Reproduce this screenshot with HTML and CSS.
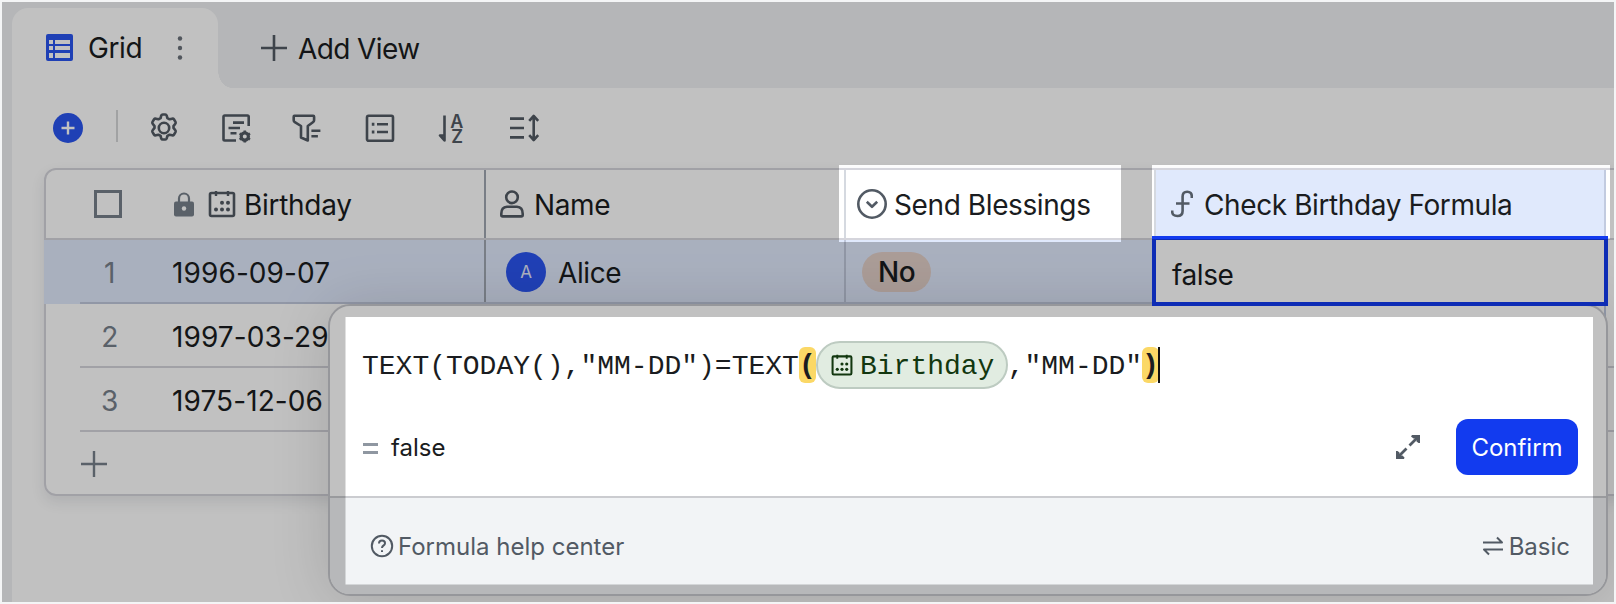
FILE: index.html
```html
<!DOCTYPE html>
<html lang="en">
  <head>
    <meta charset="UTF-8" />
    <meta name="viewport" content="width=device-width, initial-scale=1.0" />
    <link rel="stylesheet" href="styles.css">
    <title>Grid</title>
  </head>

  <body>
    <div class="app">
      <div class="sidebar"></div>
      <div class="main">
        <div class="tabs">
          <div class="tab">
            <svg class="tab-icon" width="27" height="27" viewBox="0 0 27 27">
              <rect width="27" height="27" rx="2" fill="#2a55f0" />
              <path d="M3 6h4v4H3zM9 6h15v4H9zM3 12h4v4H3zM9 12h15v4H9zM3 19h4v5H3zM9 19h15v5H9z" fill="#fff" />
            </svg>
            <span>Grid</span>
            <svg class="dots" width="6" height="26" viewBox="0 0 6 26" fill="#6b727b">
              <circle cx="3" cy="3.5" r="2.2" /><circle cx="3" cy="13" r="2.2" /><circle cx="3" cy="22.5" r="2.2" />
            </svg>
          </div>
          <div class="add-view">
            <svg width="26" height="26" viewBox="0 0 26 26" class="line"><path d="M13 0v26M0 13h26" /></svg>
            <span>Add View</span>
          </div>
        </div>

        <div class="toolbar">
          <svg class="add" width="30" height="30" viewBox="0 0 30 30">
            <circle cx="15" cy="15" r="15" fill="#2a55f0" />
            <path d="M15 8.5v13M8.5 15h13" stroke="#fff" stroke-width="2.4" />
          </svg>
          <div class="sep"></div>
          <svg class="tool line" viewBox="0 0 32 32">
            <path d="M13.2 3.6Q13.7 2.5 14.7 2.5h2.6q1 0 1.4 1.1l.7 2.5 2.2 1.2 2.5-.6q1.2-.3 1.8.6l1.6 2.6q.5.9-.2 1.8l-1.8 2.4v1.8l1.8 2.4q.7.9.2 1.8l-1.6 2.6q-.6.9-1.8.6l-2.5-.6-2.2 1.2-.7 2.5q-.4 1.1-1.4 1.1h-2.6q-1 0-1.500-1.100l-.6-2.5-2.2-1.2-2.5.6q-1.200.3-1.800-.6l-1.600-2.600q-.5-.9.2-1.800l1.800-2.400v-1.800l-1.800-2.400q-.7-.9-.2-1.800l1.600-2.600q.6-.9 1.800-.6l2.500.6 2.200-1.200z" />
            <circle cx="16" cy="16" r="5.2" />
          </svg>
          <svg class="tool line" viewBox="0 0 32 32">
            <path d="M28.7 14V4.7q0-1.2-1.2-1.2H4.7q-1.2 0-1.2 1.2v22.6q0 1.2 1.2 1.2H16M13 10.6h11M8.5 16h11.5M10.5 21.3h6" />
            <circle cx="24.8" cy="24.5" r="3.6" stroke-width="3.2" />
            <path d="M24.8 18.5v2M24.8 28.5v2M19.6 21.5l1.7 1M28.3 26.5l1.7 1M19.6 27.5l1.7-1M28.3 22.5l1.7-1" />
          </svg>
          <svg class="tool line" viewBox="0 0 32 32">
            <path d="M3 3.8h18.8q.9 0 .9 1v3.4q0 1.3-1.2 2L16.4 14v14.5l-6.8-3V14L3.4 10.2Q2.3 9.5 2.3 8.3V4.8q0-1 .7-1zM20 18.8h9M20 24.3h6.5" transform="translate(-.6 0)" />
          </svg>
          <svg class="tool line" viewBox="0 0 32 32">
            <rect x="3" y="3.8" width="26" height="25" rx="1.6" />
            <path d="M13 12.2h11M13 20h11" />
            <path d="M7.8 12.2h2.6M7.8 20h2.6" stroke-width="3" />
          </svg>
          <svg class="tool line" viewBox="0 0 32 32">
            <path d="M8.5 3.5v25L4 23.5h4.5" />
            <text x="14.2" y="16" class="az">A</text>
            <text x="15.3" y="30.5" class="az">Z</text>
          </svg>
          <svg class="tool line" viewBox="0 0 32 32">
            <path d="M2 6.6h14M2 16h14M2 25.4h14M25.7 4v24M21.2 8.800L25.7 4l4.500 4.800M21.2 23.200L25.7 28l4.500-4.800" />
          </svg>
        </div>

        <div class="table">
          <div class="row head">
            <div class="cell c-num"><div class="checkbox"></div></div>
            <div class="cell c-date">
              <svg class="lock" width="20" height="25" viewBox="0 0 20 25">
                <path d="M5 11V6.5a5 5 0 0 1 10 0V11" fill="none" stroke="#77808b" stroke-width="2.2" />
                <path d="M2 9.5h16q2 0 2 2V22.5q0 2-2 2H2q-2 0-2-2V11.5q0-2 2-2z" fill="#77808b" />
                <circle cx="10" cy="16.5" r="2.2" fill="#fff" />
              </svg>
              <svg class="cal" width="28" height="28" viewBox="0 0 28 28">
                <use href="#cal" />
              </svg>
              <span>Birthday</span>
            </div>
            <div class="cell c-name">
              <svg width="24" height="28" viewBox="0 0 24 28" class="line">
                <circle cx="12" cy="7.3" r="5.8" />
                <path d="M7 16.8h10q5.7.5 5.7 7v1.2q0 1.4-1.4 1.4H2.7q-1.400 0-1.400-1.400v-1.200q0-6.500 5.700-7z" />
              </svg>
              <span>Name</span>
            </div>
            <div class="cell c-send">
              <svg width="30" height="30" viewBox="0 0 30 30" class="line">
                <circle cx="15" cy="15" r="13.7" /><path d="M9.8 12.8l5.2 5 5.2-5" />
              </svg>
              <span>Send Blessings</span>
            </div>
            <div class="cell c-check">
              <svg width="22" height="28" viewBox="0 0 22 28" class="line">
                <path d="M20.8 8V6.5q0-4.700-4.600-4.700t-4.600 4.700V21q0 5-5.200 5t-5.200-4.500V20.500M5 13.500h13.500" />
              </svg>
              <span>Check Birthday Formula</span>
            </div>
          </div>
          <div class="row active">
            <div class="cell c-num"><span>1</span></div>
            <div class="cell c-date"><span>1996-09-07</span></div>
            <div class="cell c-name"><div class="avatar">A</div><span>Alice</span></div>
            <div class="cell c-send"><div class="chip">No</div></div>
            <div class="cell c-check"><div class="selected">false</div></div>
          </div>
          <div class="row">
            <div class="cell c-num"><span>2</span></div>
            <div class="cell c-date"><span>1997-03-29</span></div>
            <div class="cell c-name"></div>
            <div class="cell c-send"></div>
            <div class="cell c-check"></div>
          </div>
          <div class="row">
            <div class="cell c-num"><span>3</span></div>
            <div class="cell c-date"><span>1975-12-06</span></div>
            <div class="cell c-name"></div>
            <div class="cell c-send"></div>
            <div class="cell c-check"></div>
          </div>
          <div class="add-row">
            <svg width="26" height="26" viewBox="0 0 26 26"><path d="M13 0v26M0 13h26" stroke="#77808b" stroke-width="2.4" /></svg>
          </div>
        </div>
      </div>

      <div class="dialog">
        <div class="editor">
          <div class="formula"><span class="code">TEXT(TODAY(),"MM-DD")=TEXT</span><span class="paren">(</span><div class="field"><svg width="22" height="22" viewBox="0 0 28 28"><use href="#cal" /></svg><span class="code">Birthday</span></div><span class="code">,"MM-DD"</span><span class="paren">)</span><span class="caret"></span></div>
          <div class="result">
            <div class="equals"></div>
            <span class="value">false</span>
            <svg class="expand" width="26" height="26" viewBox="0 0 26 26">
              <path d="M14.5 11.5L22 4M4 22l7.5-7.5" fill="none" stroke="#525a64" stroke-width="2.8" />
              <path d="M17 1h8v8h-1.5l-2-1.5V4.5h-3L16 2.5zM9 25H1v-8h1.5l2 1.5v3h3l2 2z" fill="#525a64" />
            </svg>
            <button class="confirm">Confirm</button>
          </div>
        </div>
        <div class="footer">
          <svg width="24" height="24" viewBox="0 0 24 24" class="thin">
            <circle cx="12" cy="12" r="10.2" />
            <path d="M9 9.6q0-3 3-3t3 2.6q0 1.5-1.5 2.3T12 14" />
            <path d="M12 16.3v1.8" />
          </svg>
          <span class="help">Formula help center</span>
          <svg class="swap thin" width="22" height="20" viewBox="0 0 22 20">
            <path d="M1 6.5h19l-5-5M21 13.5H2l5 5" />
          </svg>
          <span>Basic</span>
        </div>
      </div>

      <div class="dim"></div>
    </div>

    <svg width="0" height="0" class="defs">
      <symbol id="cal" viewBox="0 0 28 28">
        <rect x="2" y="3" width="24" height="23" rx="1.5" fill="none" stroke="currentColor" stroke-width="2.6" />
        <path d="M8 1v5M20 1v5" stroke="currentColor" stroke-width="2.4" />
        <g fill="currentColor">
          <circle cx="14" cy="12.7" r="2" /><circle cx="20" cy="12.7" r="2" />
          <circle cx="8" cy="19.5" r="2" /><circle cx="14" cy="19.5" r="2" /><circle cx="20" cy="19.5" r="2" />
        </g>
      </symbol>
    </svg>
  </body>
</html>
```
FILE: styles.css
```css
* {
  box-sizing: border-box;
}

body {
  margin: 0;
  background: #f4f5f6;
  font-family: Inter, "Liberation Sans", sans-serif;
  font-size: 28px;
  line-height: 1;
  letter-spacing: -0.4px;
  color: #1a1c20;
}

svg {
  display: block;
  flex: none;
}

.defs {
  position: absolute;
}

.app {
  position: relative;
  display: flex;
  width: 1612px;
  height: 600px;
  margin: 2px;
  background: #fff;
  overflow: hidden;
}

.sidebar {
  flex: none;
  width: 10px;
  background: #eff1f3;
}

.main {
  flex: none;
  width: 1602px;
}

.line,
.thin {
  fill: none;
  stroke: #525a64;
  stroke-width: 2.6;
  stroke-linejoin: round;
}

.thin {
  stroke-width: 2;
}

/* view tabs */
.tabs {
  display: flex;
  height: 86px;
  padding-top: 6px;
  background: #eff1f3;
}

.tab {
  position: relative;
  display: flex;
  align-items: center;
  width: 206px;
  height: 80px;
  padding: 0 0 1px 34px;
  background: #fff;
  border-radius: 16px 16px 0 0;
}

.tab::after {
  content: "";
  position: absolute;
  right: -14px;
  bottom: 0;
  width: 14px;
  height: 18px;
  background: radial-gradient(ellipse 14px 18px at 100% 0, transparent 98%, #fff 100%);
}

.tab-icon {
  margin-right: 15px;
}

.dots {
  margin-left: 35px;
}

.add-view {
  display: flex;
  align-items: center;
  gap: 11px;
  padding-left: 43px;
}

.add-view span {
  padding-top: 2px;
  letter-spacing: -0.6px;
}

/* toolbar */
.toolbar {
  display: flex;
  align-items: center;
  gap: 40px;
  height: 80px;
  padding-left: 41px;
}

.sep {
  width: 2px;
  height: 32px;
  margin: -4px -10px 0 -7px;
  background: #d5d6d8;
}

.tool {
  width: 32px;
  height: 32px;
  overflow: visible;
}

.az {
  font-size: 18px;
  font-weight: 600;
  letter-spacing: 0;
  fill: #525a64;
  stroke: none;
}

/* grid */
.table {
  width: 1700px;
  margin-left: 32px;
  border: 2px solid #d5d5dc;
  border-radius: 12px;
  box-shadow: 0 6px 14px rgba(30, 35, 60, 0.1);
}

.row {
  position: relative;
  display: flex;
  height: 64px;
}

.row::after {
  content: "";
  position: absolute;
  left: 34px;
  right: 0;
  bottom: 0;
  height: 2px;
  background: #d5d5dc;
}

.head {
  height: 70px;
}

.head::after {
  left: 0;
}

.active {
  width: 1560px;
  margin-left: -2px;
  padding-left: 2px;
  background: #e0e9fc;
}

.active::after {
  left: 36px;
  background: #c0c8dc;
}

.cell {
  display: flex;
  align-items: center;
  flex: none;
  white-space: nowrap;
}

.cell span {
  padding-top: 1px;
}

.head .cell {
  padding-bottom: 2px;
}

.c-num {
  width: 90px;
  padding-left: 37px;
  justify-content: center;
  color: #77808b;
}

.c-date {
  width: 350px;
  padding-left: 36px;
  letter-spacing: 0.1px;
}

.active .c-date,
.head .c-date {
  border-right: 2px solid #a0a7b2;
}

.c-name {
  width: 360px;
  padding-left: 14px;
  border-right: 2px solid #d5d9e0;
}

.c-send {
  width: 310px;
  padding-left: 11px;
  border-right: 2px solid #d5d9e0;
}

.c-check {
  width: 450px;
  padding-left: 15px;
  border-right: 2px solid #c2cbe0;
}

.active .c-name {
  border-color: #bfc7da;
}

.head .c-check {
  background: #e0e9fc;
}

.checkbox {
  width: 28px;
  height: 28px;
  border: 3px solid #77808b;
}

.head .c-num {
  padding-left: 34px;
}

.head .c-date {
  padding-left: 38px;
  letter-spacing: -0.3px;
}

.lock {
  margin-right: 14px;
}

.cal {
  margin-right: 8px;
  color: #525a64;
}

.c-name svg {
  margin-right: 10px;
}

.c-send svg {
  margin-right: 7px;
}

.c-check svg {
  margin-right: 11px;
}

.avatar {
  display: flex;
  align-items: center;
  justify-content: center;
  width: 40px;
  height: 40px;
  margin: 0 12px 0 6px;
  border-radius: 50%;
  background: #2a55f0;
  color: #e4eafc;
  font-size: 17px;
}

.chip {
  height: 40px;
  margin-left: 5px;
  padding: 0 16px;
  border-radius: 20px;
  background: #e2cfc8;
  font-weight: 500;
  line-height: 41px;
}

.selected {
  position: absolute;
  z-index: 1;
  left: 1108px;
  top: -4px;
  width: 456px;
  height: 70px;
  padding: 4px 0 0 16px;
  border: 4px solid #123bef;
  background: #fff;
  line-height: 63px;
}

.add-row {
  display: flex;
  align-items: center;
  height: 62px;
  padding: 2px 0 0 35px;
}

/* formula editor */
.dialog {
  position: absolute;
  left: 326px;
  top: 302px;
  width: 1280px;
  height: 292px;
  display: flex;
  flex-direction: column;
  border: 2px solid #c7c8cd;
  border-radius: 22px;
  background: #fff;
  box-shadow: 0 4px 60px rgba(0, 0, 0, 0.14);
  font-size: 24px;
  letter-spacing: 0;
  overflow: hidden;
}

.editor {
  height: 192px;
  border-bottom: 2px solid #cbccd0;
}

.formula {
  display: flex;
  align-items: center;
  height: 48px;
  margin: 35px 0 0 32px;
  font-family: "Liberation Mono", monospace;
  font-size: 28px;
  white-space: pre;
}

.code {
  padding-top: 3px;
}

.paren {
  height: 36px;
  border-radius: 6px;
  background: #fbd866;
  font-weight: 700;
  line-height: 38px;
}

.field {
  display: flex;
  align-items: center;
  justify-content: center;
  gap: 7px;
  width: 192px;
  height: 48px;
  padding-left: 2px;
  border: 2px solid #bdcbc1;
  border-radius: 24px;
  background: #e1ece1;
  color: #12370f;
}

.caret {
  width: 2px;
  height: 36px;
  margin-left: -1px;
  background: #111;
}

.result {
  display: flex;
  align-items: center;
  height: 56px;
  margin: 30px 28px 0 33px;
}

.equals {
  width: 15px;
  height: 11px;
  margin: 3px 13px 0 0;
  border: solid #8f97a1;
  border-width: 3px 0;
}

.value {
  padding-top: 2px;
}

.expand {
  margin-left: auto;
}

.confirm {
  width: 122px;
  height: 56px;
  margin-left: 35px;
  padding: 2px 0 0;
  border: 0;
  border-radius: 12px;
  background: #123bef;
  color: #fff;
  font: inherit;
}

.footer {
  display: flex;
  align-items: center;
  flex: 1;
  padding: 0 36px 0 40px;
  background: #f2f4f6;
  color: #525a64;
}

.footer span {
  padding-top: 2px;
}

.help {
  margin-left: 4px;
}

.swap {
  margin: 0 5px 0 auto;
}

/* everything outside the highlighted areas is darkened */
.dim {
  position: absolute;
  z-index: 5;
  top: 0;
  left: 0;
  width: 1612px;
  height: 600px;
  background: rgba(0, 0, 0, 0.243);
  clip-path: path(evenodd, "M0 0H1612V600H0ZM837 163H1119V240H837ZM1150 163H1608V237H1150ZM343.5 315H1591V582.5H343.5Z");
}
```
